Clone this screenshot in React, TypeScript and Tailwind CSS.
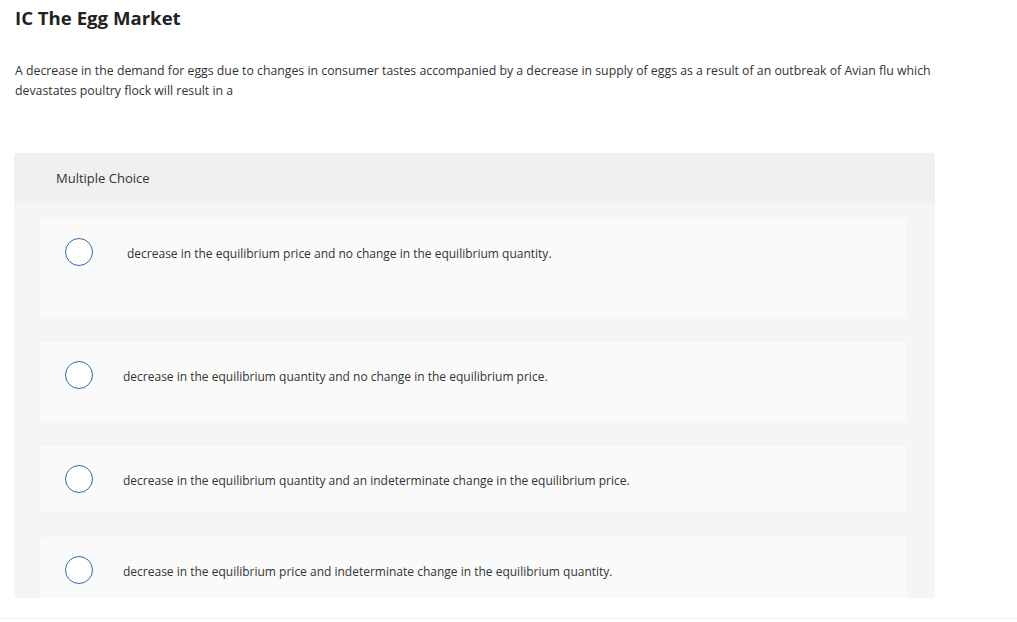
const options = [
  {
    text: "decrease in the equilibrium price and no change in the equilibrium quantity.",
    h: "h-[98px]",
    gap: "ml-[34px]",
  },
  {
    text: "decrease in the equilibrium quantity and no change in the equilibrium price.",
    h: "h-[79px]",
    gap: "ml-[30px]",
  },
  {
    text: "decrease in the equilibrium quantity and an indeterminate change in the equilibrium price.",
    h: "h-[66px]",
    gap: "ml-[30px]",
  },
  {
    text: "decrease in the equilibrium price and indeterminate change in the equilibrium quantity.",
    h: "h-[66px]",
    gap: "ml-[30px]",
  },
];

export default function App() {
  return (
    <div
      className="w-[1017px] h-[622px] bg-white text-[#333] overflow-hidden"
      style={{ fontFamily: "'Open Sans', Lato, sans-serif" }}
    >
      <div className="px-[14px]">
        {/* Title */}
        <h1 className="pl-px pt-[6px] text-[18.6px] leading-[24px] font-bold text-[#222]">
          IC The Egg Market
        </h1>

        {/* Question */}
        <p className="pl-px mt-[31px] w-[945px] text-[12.3px] leading-[20px]">
          A decrease in the demand for eggs due to changes in consumer tastes accompanied by a
          decrease in supply of eggs as a result of an outbreak of Avian flu which devastates
          poultry flock will result in a
        </p>

        {/* Answer panel */}
        <div className="mt-[52px] w-[921px] h-[445px] overflow-hidden rounded-t-[3px] bg-[#f5f5f5]">
          <div className="h-[50px] bg-[#f0f0f0] flex items-center pl-[42px] pt-[2px] text-[13px]">
            Multiple Choice
          </div>
          <div className="pt-[16px] pl-[26px] pr-[28px] flex flex-col gap-[25px]">
            {options.map((o, i) => (
              <div key={i} className={`${o.h} shrink-0 bg-[#fafafa] rounded-[2px] pt-[19px] pl-[25px]`}>
                <div className="flex items-center h-[28px]">
                  <span className="w-[28px] h-[28px] rounded-full border-[1.5px] border-[#2a6bb0] bg-white shrink-0" />
                  <span className={`${o.gap} pt-[3px] text-[12px]`}>{o.text}</span>
                </div>
              </div>
            ))}
          </div>
        </div>
      </div>
      <div className="mt-[20px] border-t border-[#eeeeee]" />
    </div>
  );
}
